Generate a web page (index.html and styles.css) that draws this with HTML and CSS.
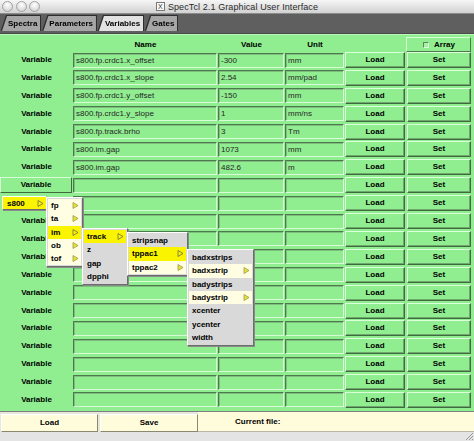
FILE: index.html
```html
<!DOCTYPE html>
<html lang="en">
<head>
    <meta charset="UTF-8">
    <title>SpecTcl 2.1 Graphical User Interface</title>
    <link rel="stylesheet" href="styles.css">
</head>
<body>
<div class="window">
    <div class="titlebar">
        <div class="lights"><span></span><span></span><span></span></div>
        <div class="title"><span class="xicon">X</span>SpecTcl 2.1 Graphical User Interface</div>
    </div>

    <div class="tabs">
        <div class="tab"><span>Spectra</span></div>
        <div class="tab"><span>Parameters</span></div>
        <div class="tab active"><span>Variables</span></div>
        <div class="tab"><span>Gates</span></div>
    </div>

    <div class="panel">
        <div class="row head">
            <div></div>
            <div class="hd">Name</div>
            <div class="hd">Value</div>
            <div class="hd">Unit</div>
            <div></div>
            <div class="array"><span class="check"></span>Array</div>
        </div>

        <div class="row">
            <div class="label">Variable</div>
            <div class="entry name">s800.fp.crdc1.x_offset</div>
            <div class="entry value">-300</div>
            <div class="entry unit">mm</div>
            <div class="btn load">Load</div>
            <div class="btn set">Set</div>
        </div>
        <div class="row">
            <div class="label">Variable</div>
            <div class="entry name">s800.fp.crdc1.x_slope</div>
            <div class="entry value">2.54</div>
            <div class="entry unit">mm/pad</div>
            <div class="btn load">Load</div>
            <div class="btn set">Set</div>
        </div>
        <div class="row">
            <div class="label">Variable</div>
            <div class="entry name">s800.fp.crdc1.y_offset</div>
            <div class="entry value">-150</div>
            <div class="entry unit">mm</div>
            <div class="btn load">Load</div>
            <div class="btn set">Set</div>
        </div>
        <div class="row">
            <div class="label">Variable</div>
            <div class="entry name">s800.fp.crdc1.y_slope</div>
            <div class="entry value">1</div>
            <div class="entry unit">mm/ns</div>
            <div class="btn load">Load</div>
            <div class="btn set">Set</div>
        </div>
        <div class="row">
            <div class="label">Variable</div>
            <div class="entry name">s800.fp.track.brho</div>
            <div class="entry value">3</div>
            <div class="entry unit">Tm</div>
            <div class="btn load">Load</div>
            <div class="btn set">Set</div>
        </div>
        <div class="row">
            <div class="label">Variable</div>
            <div class="entry name">s800.im.gap</div>
            <div class="entry value">1073</div>
            <div class="entry unit">mm</div>
            <div class="btn load">Load</div>
            <div class="btn set">Set</div>
        </div>
        <div class="row">
            <div class="label">Variable</div>
            <div class="entry name">s800.im.gap</div>
            <div class="entry value">482.6</div>
            <div class="entry unit">m</div>
            <div class="btn load">Load</div>
            <div class="btn set">Set</div>
        </div>
        <div class="row">
            <div class="label raised">Variable</div>
            <div class="entry name"></div>
            <div class="entry value"></div>
            <div class="entry unit"></div>
            <div class="btn load">Load</div>
            <div class="btn set">Set</div>
        </div>
        <div class="row">
            <div class="label">Variable</div>
            <div class="entry name"></div>
            <div class="entry value"></div>
            <div class="entry unit"></div>
            <div class="btn load">Load</div>
            <div class="btn set">Set</div>
        </div>
        <div class="row">
            <div class="label">Variable</div>
            <div class="entry name"></div>
            <div class="entry value"></div>
            <div class="entry unit"></div>
            <div class="btn load">Load</div>
            <div class="btn set">Set</div>
        </div>
        <div class="row">
            <div class="label">Variable</div>
            <div class="entry name"></div>
            <div class="entry value"></div>
            <div class="entry unit"></div>
            <div class="btn load">Load</div>
            <div class="btn set">Set</div>
        </div>
        <div class="row">
            <div class="label">Variable</div>
            <div class="entry name"></div>
            <div class="entry value"></div>
            <div class="entry unit"></div>
            <div class="btn load">Load</div>
            <div class="btn set">Set</div>
        </div>
        <div class="row">
            <div class="label">Variable</div>
            <div class="entry name"></div>
            <div class="entry value"></div>
            <div class="entry unit"></div>
            <div class="btn load">Load</div>
            <div class="btn set">Set</div>
        </div>
        <div class="row">
            <div class="label">Variable</div>
            <div class="entry name"></div>
            <div class="entry value"></div>
            <div class="entry unit"></div>
            <div class="btn load">Load</div>
            <div class="btn set">Set</div>
        </div>
        <div class="row">
            <div class="label">Variable</div>
            <div class="entry name"></div>
            <div class="entry value"></div>
            <div class="entry unit"></div>
            <div class="btn load">Load</div>
            <div class="btn set">Set</div>
        </div>
        <div class="row">
            <div class="label">Variable</div>
            <div class="entry name"></div>
            <div class="entry value"></div>
            <div class="entry unit"></div>
            <div class="btn load">Load</div>
            <div class="btn set">Set</div>
        </div>
        <div class="row">
            <div class="label">Variable</div>
            <div class="entry name"></div>
            <div class="entry value"></div>
            <div class="entry unit"></div>
            <div class="btn load">Load</div>
            <div class="btn set">Set</div>
        </div>
        <div class="row">
            <div class="label">Variable</div>
            <div class="entry name"></div>
            <div class="entry value"></div>
            <div class="entry unit"></div>
            <div class="btn load">Load</div>
            <div class="btn set">Set</div>
        </div>
        <div class="row">
            <div class="label">Variable</div>
            <div class="entry name"></div>
            <div class="entry value"></div>
            <div class="entry unit"></div>
            <div class="btn load">Load</div>
            <div class="btn set">Set</div>
        </div>
        <div class="row">
            <div class="label">Variable</div>
            <div class="entry name"></div>
            <div class="entry value"></div>
            <div class="entry unit"></div>
            <div class="btn load">Load</div>
            <div class="btn set">Set</div>
        </div>
    </div>

    <div class="bottom">
        <div class="bbtn load-file">Load</div>
        <div class="bbtn save-file">Save</div>
        <div class="current">Current file:</div>
    </div>
    <div class="status">
        <svg class="grip" width="9" height="9" viewBox="0 0 9 9">
            <path d="M8 1 L1 8 M8 4 L4 8 M8 7 L7 8" stroke="#9a9a9a" stroke-width="1"/>
        </svg>
    </div>

    <!-- posted cascade menus -->
    <div class="menu m1">
        <div class="item active">s800<svg class="arr" viewBox="0 0 7 7"><polygon points="1,0.5 6,3.5 1,6.5"/></svg></div>
    </div>
    <div class="menu m2">
        <div class="item casc">fp<svg class="arr" viewBox="0 0 7 7"><polygon points="1,0.5 6,3.5 1,6.5"/></svg></div>
        <div class="item casc">ta<svg class="arr" viewBox="0 0 7 7"><polygon points="1,0.5 6,3.5 1,6.5"/></svg></div>
        <div class="item active">im<svg class="arr" viewBox="0 0 7 7"><polygon points="1,0.5 6,3.5 1,6.5"/></svg></div>
        <div class="item casc">ob<svg class="arr" viewBox="0 0 7 7"><polygon points="1,0.5 6,3.5 1,6.5"/></svg></div>
        <div class="item casc">tof<svg class="arr" viewBox="0 0 7 7"><polygon points="1,0.5 6,3.5 1,6.5"/></svg></div>
    </div>
    <div class="menu m3">
        <div class="item active">track<svg class="arr" viewBox="0 0 7 7"><polygon points="1,0.5 6,3.5 1,6.5"/></svg></div>
        <div class="item">z</div>
        <div class="item">gap</div>
        <div class="item">dpphi</div>
    </div>
    <div class="menu m4">
        <div class="item">stripsnap</div>
        <div class="item active">tppac1<svg class="arr" viewBox="0 0 7 7"><polygon points="1,0.5 6,3.5 1,6.5"/></svg></div>
        <div class="item casc">tppac2<svg class="arr" viewBox="0 0 7 7"><polygon points="1,0.5 6,3.5 1,6.5"/></svg></div>
    </div>
    <div class="menu m5">
        <div class="item">badxstrips</div>
        <div class="item casc">badxstrip<svg class="arr" viewBox="0 0 7 7"><polygon points="1,0.5 6,3.5 1,6.5"/></svg></div>
        <div class="item">badystrips</div>
        <div class="item casc">badystrip<svg class="arr" viewBox="0 0 7 7"><polygon points="1,0.5 6,3.5 1,6.5"/></svg></div>
        <div class="item">xcenter</div>
        <div class="item">ycenter</div>
        <div class="item">width</div>
    </div>
</div>
</body>
</html>
```

FILE: styles.css
```css
* {
    box-sizing: border-box;
}
body {
    margin: 0;
    width: 474px;
    height: 441px;
    overflow: hidden;
    background: #e6e6e6;
    font-family: "Liberation Sans", Arial, sans-serif;
    font-size: 8px;
    color: #000;
}
.window {
    position: relative;
    width: 474px;
    height: 441px;
}

/* title bar */
.titlebar {
    position: relative;
    height: 14px;
    background: linear-gradient(#f6f6f6, #d2d2d2);
    border-bottom: 1px solid #8c8c8c;
    display: flex;
    justify-content: center;
    align-items: center;
}
.lights {
    position: absolute;
    left: 2px;
    top: 1px;
    display: flex;
    gap: 2.5px;
}
.lights span {
    width: 11px;
    height: 11px;
    border-radius: 50%;
    border: 1px solid #a2a2a2;
    background: radial-gradient(circle at 50% 30%, #ffffff, #cbcbcb);
}
.title {
    display: flex;
    align-items: center;
    font-size: 9px;
    color: #2a2a2a;
    letter-spacing: 0.1px;
}
.xicon {
    width: 9px;
    height: 9px;
    margin-right: 3px;
    border: 1px solid #777;
    background: #fafafa;
    font-size: 7px;
    line-height: 7px;
    text-align: center;
    color: #333;
}

/* tabs */
.tabs {
    height: 20px;
    background: #5f5f5f;
    display: flex;
    align-items: flex-start;
    padding: 2px 0 0 2px;
    gap: 3px;
    border-bottom: 1px solid #4a4a4a;
}
.tab {
    filter: drop-shadow(-1px 0 0 #2e2e2e) drop-shadow(1px 0 0 #2e2e2e) drop-shadow(0 -1px 0 #2e2e2e);
}
.tab span {
    display: block;
    height: 15px;
    line-height: 15px;
    padding: 0 3px 0 6px;
    font-weight: bold;
    background: #a6a6a6;
    clip-path: polygon(5px 0, 100% 0, 100% 100%, 0 100%);
}
.tab.active span {
    background: #e2e2e2;
}

/* variable table */
.panel {
    height: 377px;
    background: #90ee90;
    border-top: 1px solid #b8f7b8;
}
.row {
    display: grid;
    grid-template-columns: 73px 145px 67px 60px 62px 64px;
    height: 17.9px;
    align-items: center;
}
.row.head {
    height: 16px;
    margin-bottom: 0.1px;
}
.hd {
    font-weight: bold;
    text-align: center;
    padding-top: 2px;
}
.array {
    margin-left: -1px;
    height: 15px;
    margin-top: 2px;
    display: flex;
    align-items: center;
    padding-left: 16px;
    font-weight: bold;
    border: 1px solid;
    border-color: #d6fdd6 #4a7a4a #4a7a4a #d6fdd6;
}
.check {
    width: 6px;
    height: 6px;
    margin-right: 5px;
    border: 1px solid;
    border-color: #5a8a5a #e0ffe0 #e0ffe0 #5a8a5a;
    background: #a8f2a8;
}
.label {
    height: 16px;
    line-height: 14px;
    text-align: center;
    font-weight: bold;
    border: 1px solid transparent;
}
.label.raised {
    margin-right: 1px;
    border-color: #d6fdd6 #3e6a3e #3e6a3e #d6fdd6;
}
.entry {
    height: 15px;
    margin-right: 1px;
    padding-left: 2px;
    line-height: 13px;
    color: #262626;
    white-space: nowrap;
    overflow: hidden;
    border: 1px solid;
    border-color: #4c7a4c #d8fcd8 #d8fcd8 #4c7a4c;
    box-shadow: inset 1px 1px 0 #7dbd7d;
}
.btn {
    height: 16px;
    margin-right: 2px;
    line-height: 14px;
    text-align: center;
    font-weight: bold;
    border: 1px solid;
    border-color: #dcffdc #3e6a3e #3e6a3e #dcffdc;
    box-shadow: inset -1px -1px 0 #6fa86f;
}
.btn.set {
    margin-right: 0;
}

/* bottom bar */
.bottom {
    height: 21px;
    display: flex;
    background: #e8e7dc;
    border-top: 1px solid #7e7e7e;
}
.bbtn {
    margin-top: 2px;
    height: 18px;
    line-height: 16px;
    text-align: center;
    font-weight: bold;
    background: #fffcdc;
    border: 1px solid;
    border-color: #ffffff #8a8870 #8a8870 #ffffff;
}
.load-file {
    margin-left: 1px;
    width: 97px;
}
.save-file {
    margin-left: 2px;
    width: 98px;
}
.current {
    flex: 1;
    background: #fffcdc;
    padding-left: 37px;
    line-height: 20px;
    font-weight: bold;
    border-bottom: 1px solid #b9b8a8;
}
.status {
    position: relative;
    height: 9px;
    background: #e4e4e4;
}
.grip {
    position: absolute;
    right: 0;
    bottom: 0;
}

/* posted menus */
.menu {
    position: absolute;
    background: #d9d9d9;
    padding: 1px;
    border: 1px solid;
    border-color: #ffffff #6c6c6c #6c6c6c #ffffff;
    box-shadow: 1px 1px 0 #8a8a8a;
}
.item {
    height: 13.3px;
    display: flex;
    align-items: center;
    justify-content: space-between;
    padding: 0 2px 0 3px;
    font-weight: bold;
    white-space: nowrap;
}
.item.casc {
    background: #fffde2;
}
.item.active {
    background: #fbf400;
}
.arr {
    width: 7px;
    height: 7px;
}
.arr polygon {
    fill: #e6e23a;
    stroke: #9c9a4a;
    stroke-width: 0.8;
}
.item.active .arr polygon {
    fill: #fbf400;
    stroke: #6d6d50;
}
.m1 {
    left: 2px;
    top: 196px;
    width: 45px;
    padding: 0;
}
.m1 .item {
    height: 12px;
    padding-left: 4px;
}
.m2 {
    left: 46px;
    top: 197px;
    width: 37px;
}
.m3 {
    left: 82px;
    top: 228px;
    width: 46px;
}
.m4 {
    left: 127px;
    top: 232px;
    width: 61px;
}
.m5 {
    left: 187px;
    top: 249px;
    width: 67px;
}
```
